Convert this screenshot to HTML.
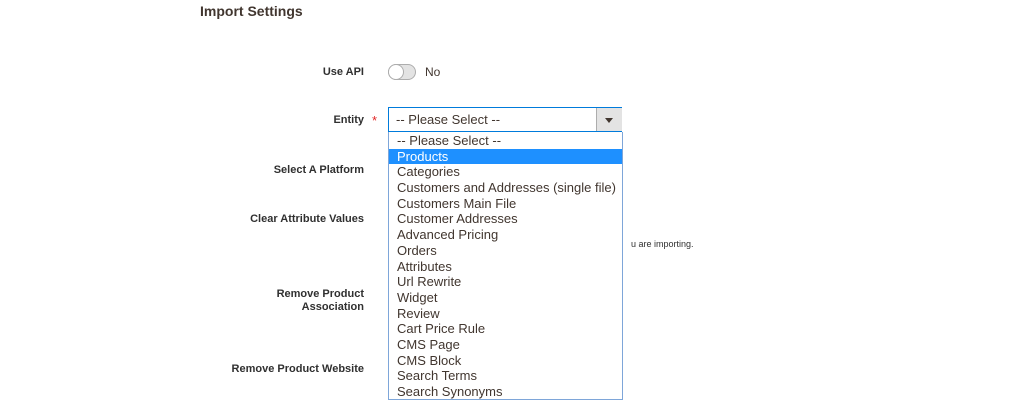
<!DOCTYPE html>
<html><head><style>
body{margin:0;width:1024px;height:414px;background:#fff;font-family:"Liberation Sans",sans-serif;color:#303030;position:relative;overflow:hidden}
.a{position:absolute;white-space:nowrap}
.lbl{position:absolute;right:660px;font-size:11px;font-weight:bold;color:#303030;text-align:right;line-height:13px}
.it{height:15.7px;line-height:15.7px;padding-left:8px;font-size:13px;color:#41362f}
</style></head><body>
<div class="a" style="left:200px;top:3px;font-size:14px;font-weight:bold;color:#41362f">Import Settings</div>
<div class="lbl" style="top:66px">Use API</div>
<div class="a" style="left:388px;top:64px;width:28px;height:16px;border:1px solid #adadad;border-radius:9px;background:#e3e3e3;box-sizing:border-box"></div>
<div class="a" style="left:388px;top:64px;width:16px;height:16px;border:1px solid #adadad;border-radius:50%;background:#fff;box-sizing:border-box"></div>
<div class="a" style="left:425px;top:65px;font-size:12px;color:#41362f">No</div>
<div class="lbl" style="top:114px">Entity</div>
<div class="a" style="left:372px;top:113px;color:#e22626;font-size:13px">*</div>
<div class="a" style="left:388px;top:107px;width:234px;height:25px;border:1px solid #007bdb;box-sizing:border-box;background:#fff"></div>
<div class="a" style="left:396px;top:112px;font-size:13px;color:#41362f">-- Please Select --</div>
<div class="a" style="left:596px;top:108px;width:25px;height:23px;background:#e3e3e3;border-left:1px solid #adadad"></div>
<div class="a" style="left:605px;top:118px;width:0;height:0;border-left:4px solid transparent;border-right:4px solid transparent;border-top:5px solid #41362f"></div>
<div class="lbl" style="top:164px">Select A Platform</div>
<div class="lbl" style="top:213px">Clear Attribute Values</div>
<div class="lbl" style="top:288px">Remove Product<br>Association</div>
<div class="lbl" style="top:363px">Remove Product Website</div>
<div class="a" style="left:631px;top:239px;font-size:9px;color:#303030">u are importing.</div>
<div class="a" style="left:388px;top:132px;width:235px;height:268px;border:1px solid #7ea6d9;border-top:none;box-sizing:border-box;background:#fff;padding-top:1px">
<div class="it">-- Please Select --</div>
<div class="it" style="background:#1e90ff;color:#fff">Products</div>
<div class="it">Categories</div>
<div class="it">Customers and Addresses (single file)</div>
<div class="it">Customers Main File</div>
<div class="it">Customer Addresses</div>
<div class="it">Advanced Pricing</div>
<div class="it">Orders</div>
<div class="it">Attributes</div>
<div class="it">Url Rewrite</div>
<div class="it">Widget</div>
<div class="it">Review</div>
<div class="it">Cart Price Rule</div>
<div class="it">CMS Page</div>
<div class="it">CMS Block</div>
<div class="it">Search Terms</div>
<div class="it">Search Synonyms</div>
</div>
</body></html>
